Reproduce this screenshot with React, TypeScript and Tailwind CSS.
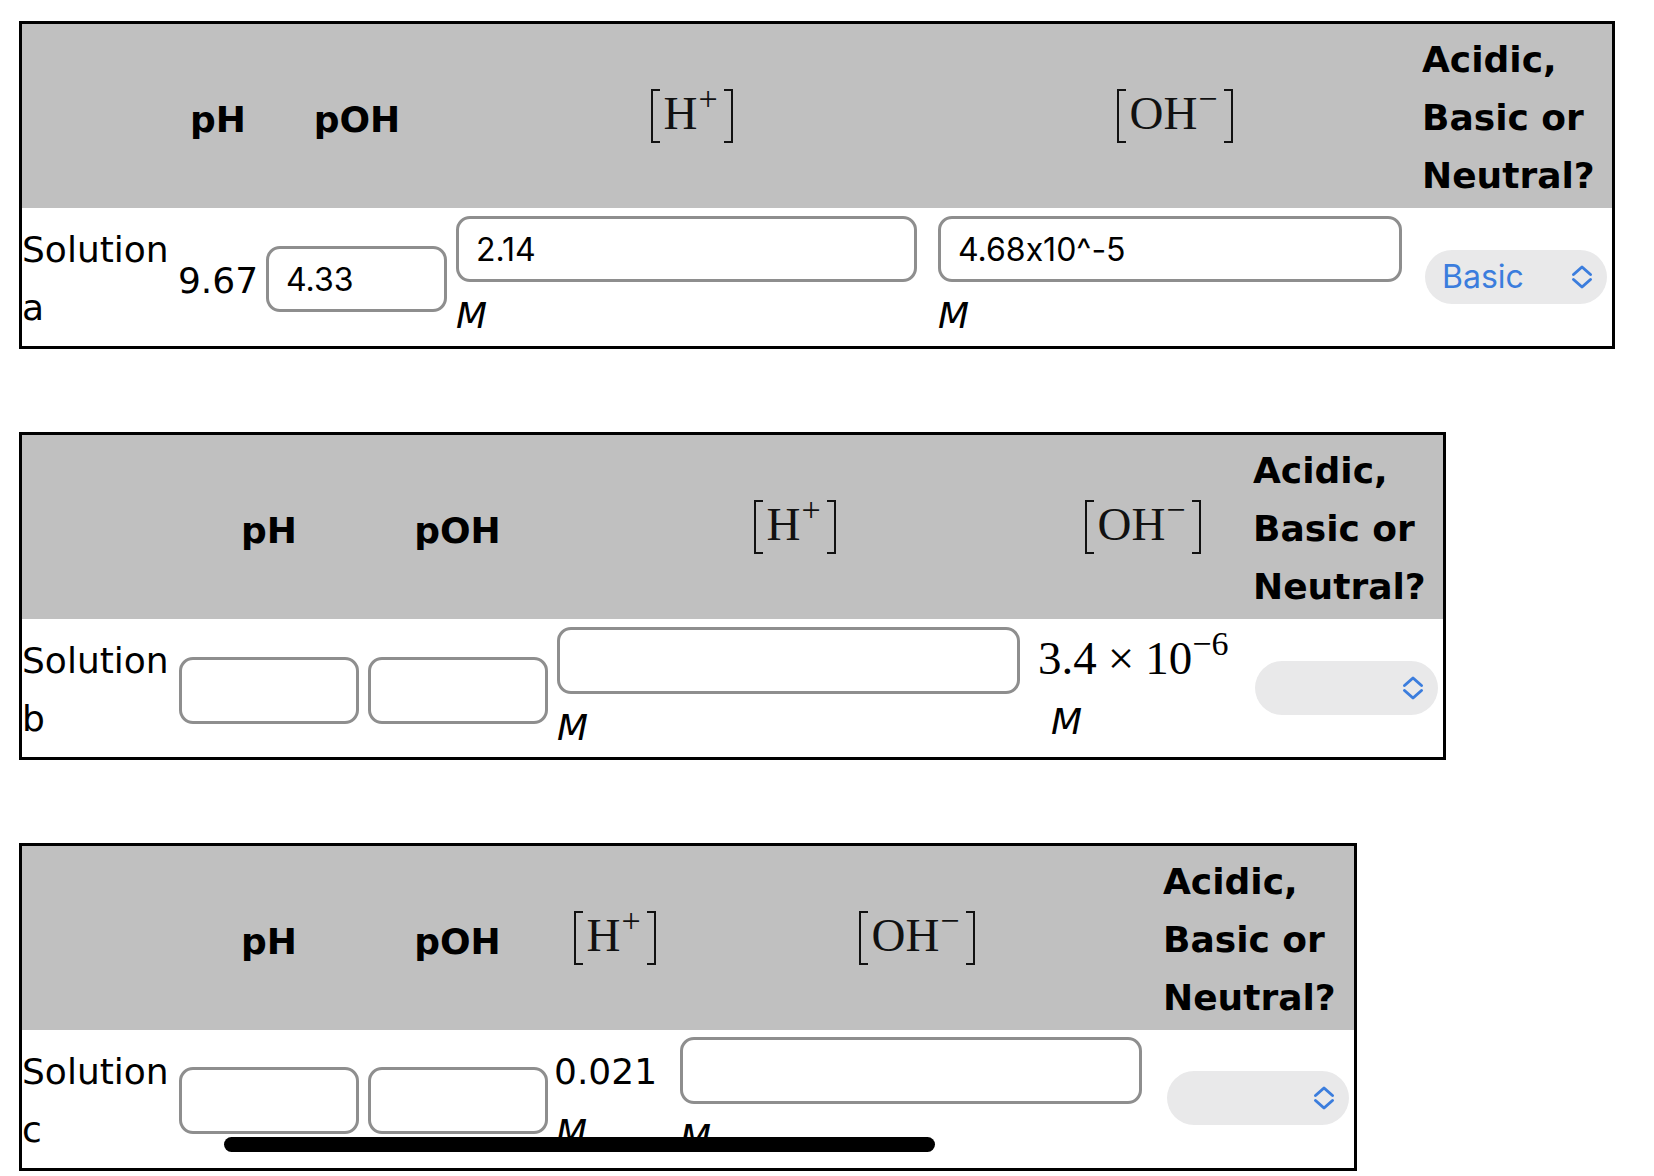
import React from "react";

function Field({ className, value = "" }: { className: string; value?: string }) {
  return (
    <input
      readOnly
      value={value}
      className={
        "block rounded-[14px] border-[3px] border-[#8e8e8e] bg-white px-[17px] font-['Inter',sans-serif] text-[32px] text-black outline-none [font-feature-settings:'calt'_0] " +
        className
      }
    />
  );
}

function Chevrons() {
  return (
    <svg width="24" height="26" viewBox="0 0 24 26" fill="none" stroke="#3b7ddd" strokeWidth="3" strokeLinecap="round" strokeLinejoin="round">
      <path d="M3.5 10.5 L12 3 L20.5 10.5" />
      <path d="M3.5 15.5 L12 23 L20.5 15.5" />
    </svg>
  );
}

function Choice({ className, value = "" }: { className: string; value?: string }) {
  return (
    <div
      className={
        "flex h-[54px] items-center justify-between rounded-full bg-[#e9e9ea] pl-[17px] pr-[13px] font-['Inter',sans-serif] text-[32px] text-[#3b7ddd] " +
        className
      }
    >
      <span>{value}</span>
      <Chevrons />
    </div>
  );
}

function Ion({ kind }: { kind: "H" | "OH" }) {
  return (
    <div className="flex items-center font-['Liberation_Serif',serif] text-[#111]">
      <span className="block h-[54px] w-[9px] border-y-2 border-l-2 border-[#111]" />
      <span className="ml-[3px] mb-[7px] whitespace-nowrap text-[47px] leading-[54px]">
        {kind === "H" ? "H" : "OH"}
        <sup className="ml-[1px] top-[-19px] text-[34px]">{kind === "H" ? "+" : "−"}</sup>
      </span>
      <span className="ml-[6px] block h-[54px] w-[9px] border-y-2 border-r-2 border-[#111]" />
    </div>
  );
}

function HeadText({ children }: { children: React.ReactNode }) {
  return (
    <div className="flex items-center justify-center pt-[7px]">
      <span className="text-[36px] font-bold leading-[58px]">{children}</span>
    </div>
  );
}

function HeadMath({ children }: { children: React.ReactNode }) {
  return <div className="flex items-center justify-center">{children}</div>;
}

function ABN({ className }: { className: string }) {
  return (
    <div className={"pt-[7px] text-[36px] font-bold leading-[58px] " + className}>
      Acidic, Basic or Neutral?
    </div>
  );
}

function Sol({ letter }: { letter: string }) {
  return <div className="pt-[13px] text-[36px] leading-[58px]">Solution {letter}</div>;
}

function M({ className }: { className: string }) {
  return <div className={"text-[36px] italic leading-[58px] " + className}>M</div>;
}

function Table1() {
  return (
    <div className="w-[1596px] border-[3px] border-black">
      <div className="grid h-[184px] grid-cols-[151px_90px_188px_482px_484px_195px] bg-[#c0c0c0]">
        <div />
        <HeadText>pH</HeadText>
        <HeadText>pOH</HeadText>
        <HeadMath>
          <Ion kind="H" />
        </HeadMath>
        <HeadMath>
          <Ion kind="OH" />
        </HeadMath>
        <ABN className="pl-[5px]" />
      </div>
      <div className="grid h-[138px] grid-cols-[151px_90px_188px_482px_484px_195px] bg-white">
        <Sol letter="a" />
        <div className="pt-[44px] text-center text-[36px] leading-[58px]">9.67</div>
        <div>
          <Field className="ml-[3px] mt-[38px] h-[66px] w-[181px]" value="4.33" />
        </div>
        <div className="flex flex-col items-start pl-[5px]">
          <Field className="mt-[8px] h-[66px] w-[461px]" value="2.14" />
          <M className="mt-[5px]" />
        </div>
        <div className="flex flex-col items-start pl-[5px]">
          <Field className="mt-[8px] h-[66px] w-[464px]" value="4.68x10^-5" />
          <M className="mt-[5px]" />
        </div>
        <div className="pl-[8px] pt-[42px]">
          <Choice className="w-[182px]" value="Basic" />
        </div>
      </div>
    </div>
  );
}

function Table2() {
  return (
    <div className="w-[1427px] border-[3px] border-black">
      <div className="grid h-[184px] grid-cols-[153px_188px_189px_486px_210px_195px] bg-[#c0c0c0]">
        <div />
        <HeadText>pH</HeadText>
        <HeadText>pOH</HeadText>
        <HeadMath>
          <Ion kind="H" />
        </HeadMath>
        <HeadMath>
          <Ion kind="OH" />
        </HeadMath>
        <ABN className="pl-[5px]" />
      </div>
      <div className="grid h-[138px] grid-cols-[153px_188px_189px_486px_210px_195px] bg-white">
        <Sol letter="b" />
        <div>
          <Field className="ml-[4px] mt-[38px] h-[67px] w-[180px]" />
        </div>
        <div>
          <Field className="ml-[5px] mt-[38px] h-[67px] w-[180px]" />
        </div>
        <div className="flex flex-col items-start pl-[5px]">
          <Field className="mt-[8px] h-[67px] w-[463px]" />
          <M className="mt-[5px]" />
        </div>
        <div className="flex flex-col items-start">
          <div className="mt-[10px] whitespace-nowrap font-['Liberation_Serif',serif] text-[47px] leading-[58px]">
            3.4<span className="mx-[11px]">×</span>10
            <sup className="top-[-19px] text-[34px]">−6</sup>
          </div>
          <M className="ml-[13px] mt-[6px]" />
        </div>
        <div className="pl-[7px] pt-[42px]">
          <Choice className="w-[183px]" />
        </div>
      </div>
    </div>
  );
}

function Table3() {
  return (
    <div className="w-[1338px] border-[3px] border-black">
      <div className="grid h-[184px] grid-cols-[153px_188px_189px_126px_478px_198px] bg-[#c0c0c0]">
        <div />
        <HeadText>pH</HeadText>
        <HeadText>pOH</HeadText>
        <HeadMath>
          <Ion kind="H" />
        </HeadMath>
        <HeadMath>
          <Ion kind="OH" />
        </HeadMath>
        <ABN className="pl-[7px]" />
      </div>
      <div className="grid h-[138px] grid-cols-[153px_188px_189px_126px_478px_198px] bg-white">
        <Sol letter="c" />
        <div>
          <Field className="ml-[4px] mt-[37px] h-[67px] w-[180px]" />
        </div>
        <div>
          <Field className="ml-[5px] mt-[37px] h-[67px] w-[180px]" />
        </div>
        <div className="flex flex-col items-start pl-[2px]">
          <div className="pt-[13px] text-[36px] leading-[58px]">0.021</div>
          <M className="ml-[2px] mt-[3px]" />
        </div>
        <div className="flex flex-col items-start pl-[2px]">
          <Field className="mt-[7px] h-[67px] w-[462px]" />
          <M className="mt-[5px]" />
        </div>
        <div className="pl-[11px] pt-[41px]">
          <Choice className="w-[182px]" />
        </div>
      </div>
    </div>
  );
}

export default function App() {
  return (
    <div className="relative h-[1176px] w-[1654px] overflow-hidden bg-white font-['DejaVu_Sans',sans-serif] text-black">
      <div className="flex flex-col items-start gap-[83px] pl-[19px] pt-[21px]">
        <Table1 />
        <Table2 />
        <Table3 />
      </div>
      <div className="absolute left-[224px] top-[1137px] h-[15px] w-[711px] rounded-full bg-black" />
    </div>
  );
}
